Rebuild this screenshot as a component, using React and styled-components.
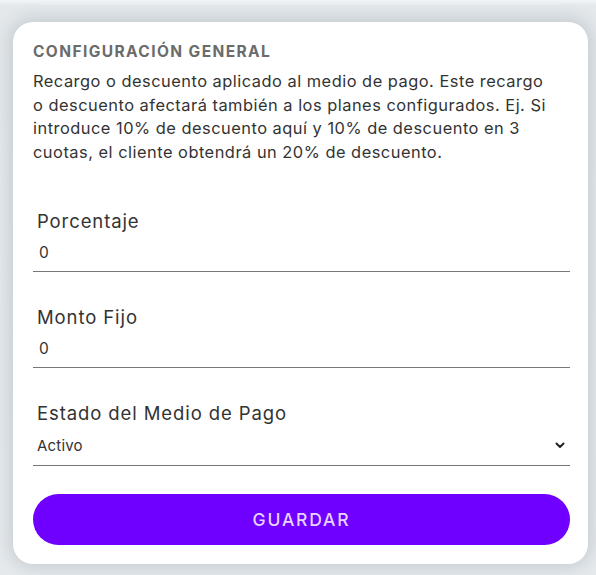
import React from 'react';
import styled, { createGlobalStyle } from 'styled-components';

const GlobalStyle = createGlobalStyle`
  html, body {
    margin: 0;
    padding: 0;
    background: #e8ecef;
  }
  body {
    font-family: Inter, "Open Sans", sans-serif;
  }
`;

const Page = styled.div`
  padding: 22px 8px 12px 13px;
  box-sizing: border-box;
  min-height: 575px;
  background: linear-gradient(180deg, #f3f5f7 0px, #e4e8eb 6px, #e6eaed 100%);
`;

const Card = styled.div`
  background: #fff;
  border-radius: 20px;
  box-shadow: 0 0 16px 4px rgba(120, 132, 145, 0.28);
  padding: 19px 18px 19px 20px;
  display: flex;
  flex-direction: column;
`;

const Title = styled.h2`
  margin: 0;
  font-size: 15.5px;
  font-weight: 700;
  color: #6b6b6b;
  letter-spacing: 1.4px;
  line-height: 22px;
`;

const Description = styled.p`
  margin: 7px 0 0;
  max-width: 522px;
  font-size: 16.4px;
  line-height: 23.5px;
  letter-spacing: 0.5px;
  color: #333;
`;

const Fields = styled.div`
  display: flex;
  flex-direction: column;
  gap: 33px;
  margin-top: 45px;
`;

const Field = styled.label`
  display: flex;
  flex-direction: column;
  border-bottom: 1px solid #777;
`;

const Label = styled.span`
  font-size: 18.5px;
  letter-spacing: 0.9px;
  color: #333;
  line-height: 24px;
  padding-left: 4px;
`;

const Input = styled.input`
  border: none;
  outline: none;
  background: transparent;
  font-family: inherit;
  font-size: 15.5px;
  color: #333;
  padding: 0 6px;
  height: 38px;
  box-sizing: border-box;
`;

const SelectWrap = styled.div`
  position: relative;
  display: flex;
  align-items: center;
`;

const Select = styled.select`
  appearance: none;
  border: none;
  outline: none;
  background: transparent;
  font-family: inherit;
  font-size: 15px;
  letter-spacing: 0.2px;
  color: #333;
  width: 100%;
  padding: 0 4px;
  height: 40px;
  box-sizing: border-box;
`;

const Chevron = styled.svg`
  position: absolute;
  right: 4px;
  top: 14px;
  width: 12px;
  height: 12px;
  pointer-events: none;
`;

const Button = styled.button`
  margin-top: 28px;
  height: 51px;
  border: none;
  border-radius: 26px;
  background: #6f00ff;
  color: #e6d3ff;
  font-family: inherit;
  font-size: 17.5px;
  font-weight: 500;
  letter-spacing: 1.8px;
  cursor: pointer;
`;

export default function App() {
  return (
    <>
      <GlobalStyle />
      <Page>
        <Card>
          <Title>CONFIGURACIÓN GENERAL</Title>
          <Description>
            Recargo o descuento aplicado al medio de pago. Este recargo o descuento afectará también a los
            planes configurados. Ej. Si introduce 10% de descuento aquí y 10% de descuento en 3 cuotas, el
            cliente obtendrá un 20% de descuento.
          </Description>
          <Fields>
            <Field>
              <Label>Porcentaje</Label>
              <Input defaultValue="0" />
            </Field>
            <Field>
              <Label>Monto Fijo</Label>
              <Input defaultValue="0" />
            </Field>
            <Field>
              <Label>Estado del Medio de Pago</Label>
              <SelectWrap>
                <Select defaultValue="activo">
                  <option value="activo">Activo</option>
                  <option value="inactivo">Inactivo</option>
                </Select>
                <Chevron viewBox="0 0 12 12" fill="none" stroke="#222" strokeWidth={2} strokeLinecap="round" strokeLinejoin="round">
                  <path d="M2.5 4.5 L6 8 L9.5 4.5" />
                </Chevron>
              </SelectWrap>
            </Field>
          </Fields>
          <Button>GUARDAR</Button>
        </Card>
      </Page>
    </>
  );
}
